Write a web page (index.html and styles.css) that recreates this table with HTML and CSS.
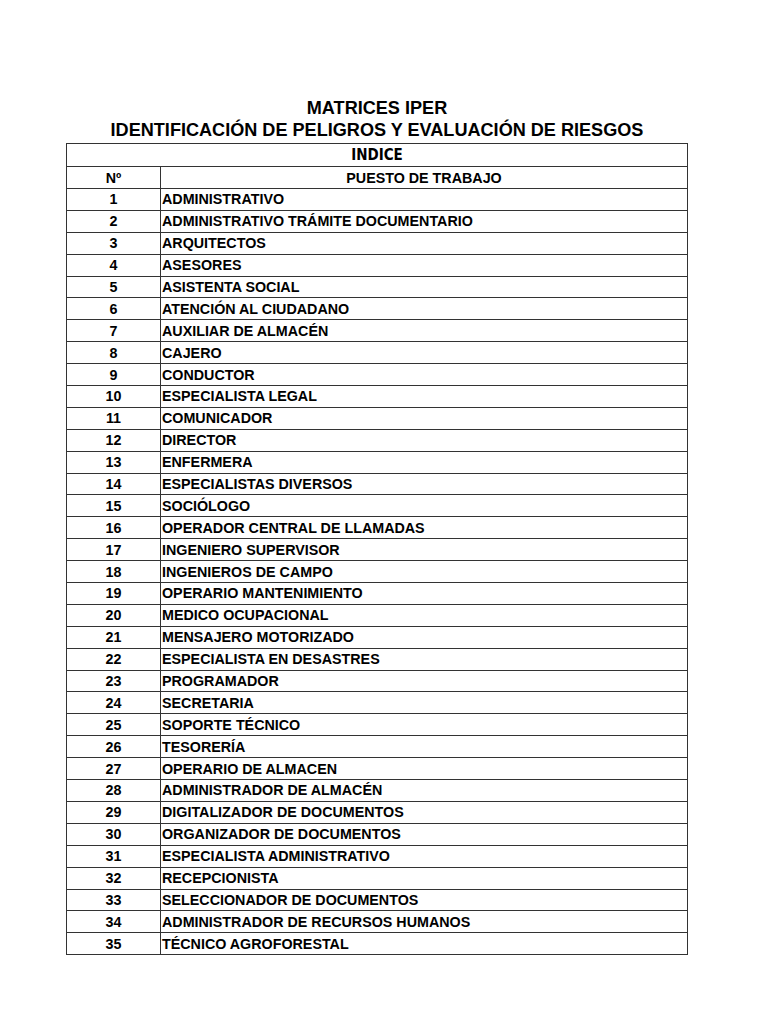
FILE: index.html
```html
<!DOCTYPE html>
<html lang="es">
<head>
<meta charset="utf-8">
<title>Matrices IPER</title>
<link rel="stylesheet" href="styles.css">
</head>
<body>
<div class="page">
  <h1 class="title">MATRICES IPER<br>IDENTIFICACIÓN DE PELIGROS Y EVALUACIÓN DE RIESGOS</h1>
  <table class="index">
    <colgroup><col class="c-num"><col class="c-name"></colgroup>
    <thead>
      <tr class="r-indice"><th colspan="2">INDICE</th></tr>
      <tr class="r-head"><th>Nº</th><th>PUESTO DE TRABAJO</th></tr>
    </thead>
    <tbody>
      <tr><td>1</td><td>ADMINISTRATIVO</td></tr>
      <tr><td>2</td><td>ADMINISTRATIVO TRÁMITE DOCUMENTARIO</td></tr>
      <tr><td>3</td><td>ARQUITECTOS</td></tr>
      <tr><td>4</td><td>ASESORES</td></tr>
      <tr><td>5</td><td>ASISTENTA SOCIAL</td></tr>
      <tr><td>6</td><td>ATENCIÓN AL CIUDADANO</td></tr>
      <tr><td>7</td><td>AUXILIAR DE ALMACÉN</td></tr>
      <tr><td>8</td><td>CAJERO</td></tr>
      <tr><td>9</td><td>CONDUCTOR</td></tr>
      <tr><td>10</td><td>ESPECIALISTA LEGAL</td></tr>
      <tr><td>11</td><td>COMUNICADOR</td></tr>
      <tr><td>12</td><td>DIRECTOR</td></tr>
      <tr><td>13</td><td>ENFERMERA</td></tr>
      <tr><td>14</td><td>ESPECIALISTAS DIVERSOS</td></tr>
      <tr><td>15</td><td>SOCIÓLOGO</td></tr>
      <tr><td>16</td><td>OPERADOR CENTRAL DE LLAMADAS</td></tr>
      <tr><td>17</td><td>INGENIERO SUPERVISOR</td></tr>
      <tr><td>18</td><td>INGENIEROS DE CAMPO</td></tr>
      <tr><td>19</td><td>OPERARIO MANTENIMIENTO</td></tr>
      <tr><td>20</td><td>MEDICO OCUPACIONAL</td></tr>
      <tr><td>21</td><td>MENSAJERO MOTORIZADO</td></tr>
      <tr><td>22</td><td>ESPECIALISTA EN DESASTRES</td></tr>
      <tr><td>23</td><td>PROGRAMADOR</td></tr>
      <tr><td>24</td><td>SECRETARIA</td></tr>
      <tr><td>25</td><td>SOPORTE TÉCNICO</td></tr>
      <tr><td>26</td><td>TESORERÍA</td></tr>
      <tr><td>27</td><td>OPERARIO DE ALMACEN</td></tr>
      <tr><td>28</td><td>ADMINISTRADOR DE ALMACÉN</td></tr>
      <tr><td>29</td><td>DIGITALIZADOR DE DOCUMENTOS</td></tr>
      <tr><td>30</td><td>ORGANIZADOR DE DOCUMENTOS</td></tr>
      <tr><td>31</td><td>ESPECIALISTA ADMINISTRATIVO</td></tr>
      <tr><td>32</td><td>RECEPCIONISTA</td></tr>
      <tr><td>33</td><td>SELECCIONADOR DE DOCUMENTOS</td></tr>
      <tr><td>34</td><td>ADMINISTRADOR DE RECURSOS HUMANOS</td></tr>
      <tr><td>35</td><td>TÉCNICO AGROFORESTAL</td></tr>
    </tbody>
  </table>
</div>
</body>
</html>
```
FILE: styles.css
```css
html, body {
  margin: 0;
  padding: 0;
  background: #ffffff;
}
body {
  font-family: "Liberation Sans", Arial, sans-serif;
  color: #000;
}
.page {
  width: 768px;
  height: 1024px;
  padding-top: 97px;
  box-sizing: border-box;
}
.title {
  margin: 0 0 2px 66px;
  width: 622px;
  font-size: 18.1px;
  line-height: 22px;
  font-weight: bold;
  text-align: center;
}
.index {
  margin-left: 66px;
  width: 622px;
  border-collapse: collapse;
  table-layout: fixed;
  border: 1px solid #333;
}
.c-num { width: 94px; }
.index th, .index td {
  border: 1px solid #333;
  padding: 0 1px;
  font-size: 14.3px;
  font-weight: bold;
  line-height: 16px;
  white-space: nowrap;
  overflow: hidden;
}
.r-indice th {
  height: 22px;
  font-family: "DejaVu Sans Condensed", "DejaVu Sans", sans-serif;
  font-size: 15px;
  text-align: center;
}
.r-head th {
  height: 21px;
  text-align: center;
}
.index tbody td {
  height: 20.9px;
  text-align: left;
}
.index tbody td:first-child {
  text-align: center;
}
```
